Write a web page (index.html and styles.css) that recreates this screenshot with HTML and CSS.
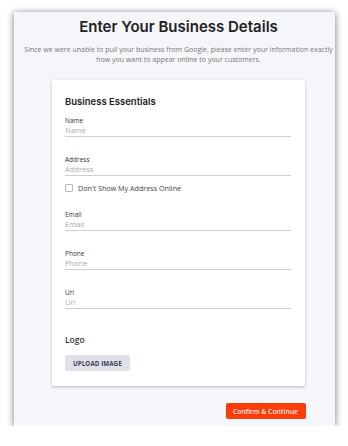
FILE: index.html
```html
<!DOCTYPE html>
<html lang="en">
<head>
    <meta charset="UTF-8">
    <meta name="viewport" content="width=device-width, initial-scale=1.0">
    <title>Enter Your Business Details</title>
    <link rel="stylesheet" href="styles.css">
</head>
<body>
    <div class="panel">
        <h1 class="title">Enter Your Business Details</h1>
        <p class="subtitle">Since we were unable to pull your business from Google, please enter your information exactly<br>how you want to appear online to your customers.</p>

        <div class="card">
            <h2 class="card-title">Business Essentials</h2>

            <div class="field">
                <label for="name">Name</label>
                <input type="text" id="name" placeholder="Name">
            </div>

            <div class="field">
                <label for="address">Address</label>
                <input type="text" id="address" placeholder="Address">
            </div>

            <label class="check">
                <span class="box"></span>
                Don't Show My Address Online
            </label>

            <div class="field">
                <label for="email">Email</label>
                <input type="email" id="email" placeholder="Email">
            </div>

            <div class="field">
                <label for="phone">Phone</label>
                <input type="text" id="phone" placeholder="Phone">
            </div>

            <div class="field">
                <label for="url">Url</label>
                <input type="text" id="url" placeholder="Url">
            </div>

            <h3 class="logo-title">Logo</h3>
            <button class="upload">UPLOAD IMAGE</button>
        </div>

        <div class="actions">
            <button class="confirm">Confirm &amp; Continue</button>
        </div>
    </div>
</body>
</html>
```

FILE: styles.css
```css
body {
    margin: 0;
    padding: 12px 0 0 14px;
    background: #fff;
    font-family: "Open Sans", sans-serif;
}

.panel {
    width: 321px;
    height: 414px;
    box-sizing: border-box;
    padding: 5px 0 0 8px;
    background: #f5f6fa;
    box-shadow: 0 1px 7px rgba(0, 0, 0, 0.55);
}

.title {
    margin: 0;
    font-family: Inter, sans-serif;
    font-weight: 600;
    font-size: 15px;
    line-height: 20px;
    color: #222;
    text-align: center;
}

.subtitle {
    margin: 8px 0 0 0;
    font-size: 7px;
    line-height: 10px;
    color: #777;
    text-align: center;
}

.card {
    width: 253px;
    box-sizing: border-box;
    margin: 15px auto 0 auto;
    padding: 15px 14px 15px 13px;
    background: #fff;
    border-radius: 2px;
    box-shadow: 0 1px 3px rgba(0, 0, 0, 0.25);
}

.card-title {
    margin: 0;
    font-family: Inter, sans-serif;
    font-weight: 600;
    font-size: 9.5px;
    line-height: 14px;
    color: #222;
}

.field {
    margin-top: 7px;
}

.field + .field,
.check + .field {
    margin-top: 18px;
}

.field label {
    display: block;
    font-size: 6.5px;
    line-height: 9px;
    color: #333;
}

.field input {
    display: block;
    width: 100%;
    box-sizing: border-box;
    height: 12px;
    margin: 0;
    padding: 0 0 1px 0;
    border: none;
    border-bottom: 1px solid #cfcfcf;
    background: transparent;
    font-family: "Open Sans", sans-serif;
    font-size: 7.5px;
    line-height: 10px;
    color: #333;
    outline: none;
}

.field input::placeholder {
    color: #aaa;
}

.check {
    display: flex;
    align-items: center;
    gap: 5px;
    margin-top: 8px;
    font-size: 7.2px;
    line-height: 8px;
    color: #444;
}

.box {
    width: 6px;
    height: 6px;
    border: 1px solid #bbb;
    border-radius: 1px;
}

.logo-title {
    margin: 25px 0 0 0;
    font-size: 8.5px;
    line-height: 12px;
    font-weight: 600;
    color: #333;
}

.upload {
    display: block;
    margin-top: 9px;
    height: 16px;
    padding: 0 8px;
    border: none;
    border-radius: 2px;
    background: #dfe1e8;
    font-family: "Open Sans", sans-serif;
    font-size: 6.2px;
    font-weight: 700;
    color: #3a3f55;
    letter-spacing: 0.1px;
}

.actions {
    display: flex;
    justify-content: flex-end;
    width: 254px;
    margin: 17px auto 0 auto;
}

.confirm {
    width: 80px;
    height: 16px;
    padding: 0;
    border: none;
    border-radius: 2px;
    background: #fa3c0a;
    font-family: "Open Sans", sans-serif;
    font-size: 6.8px;
    font-weight: 600;
    color: #ffe9e0;
    cursor: pointer;
}
```
